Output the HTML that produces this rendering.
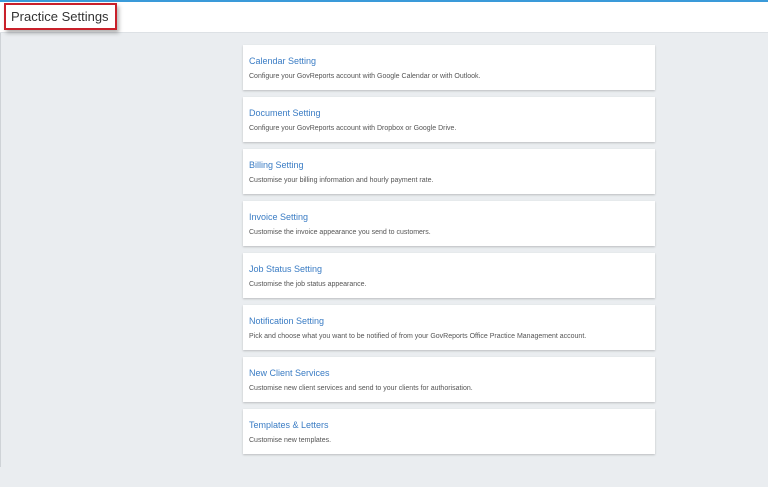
<!DOCTYPE html>
<html><head><style>
body{margin:0;width:768px;height:487px;background:#eaedf0;font-family:"Liberation Sans",Arial,sans-serif;position:relative;overflow:hidden}
.top{position:absolute;left:0;top:0;width:768px;height:2px;background:#3a9ad9}
.hdr{position:absolute;left:0;top:2px;width:768px;height:30px;background:#fff;border-bottom:1px solid #dde1e5}
.box{position:absolute;left:4px;top:3px;width:104px;height:23px;border:2px solid #c9202a;box-shadow:2px 3px 4px rgba(0,0,0,.3);font-size:13px;color:#333;line-height:23px;padding-left:5px;box-sizing:content-box}
.side{position:absolute;left:0;top:33px;width:1px;height:434px;background:#cfd3d7}
.card{position:absolute;left:243px;width:412px;height:45px;background:#fff;box-shadow:0 1px 2px rgba(0,0,0,.2)}
.card .t{position:absolute;left:6px;top:11px;font-size:9px;color:#3a7cc4}
.card .d{position:absolute;left:6px;top:28px;font-size:7px;color:#555}
</style></head><body>
<div class="top"></div><div class="hdr"></div>
<div class="box">Practice Settings</div>
<div class="side"></div>
<div class="card" style="top:45px"><div class="t">Calendar Setting</div><div class="d">Configure your GovReports account with Google Calendar or with Outlook.</div></div>
<div class="card" style="top:97px"><div class="t">Document Setting</div><div class="d">Configure your GovReports account with Dropbox or Google Drive.</div></div>
<div class="card" style="top:149px"><div class="t">Billing Setting</div><div class="d">Customise your billing information and hourly payment rate.</div></div>
<div class="card" style="top:201px"><div class="t">Invoice Setting</div><div class="d">Customise the invoice appearance you send to customers.</div></div>
<div class="card" style="top:253px"><div class="t">Job Status Setting</div><div class="d">Customise the job status appearance.</div></div>
<div class="card" style="top:305px"><div class="t">Notification Setting</div><div class="d">Pick and choose what you want to be notified of from your GovReports Office Practice Management account.</div></div>
<div class="card" style="top:357px"><div class="t">New Client Services</div><div class="d">Customise new client services and send to your clients for authorisation.</div></div>
<div class="card" style="top:409px"><div class="t">Templates &amp; Letters</div><div class="d">Customise new templates.</div></div>
</body></html>
